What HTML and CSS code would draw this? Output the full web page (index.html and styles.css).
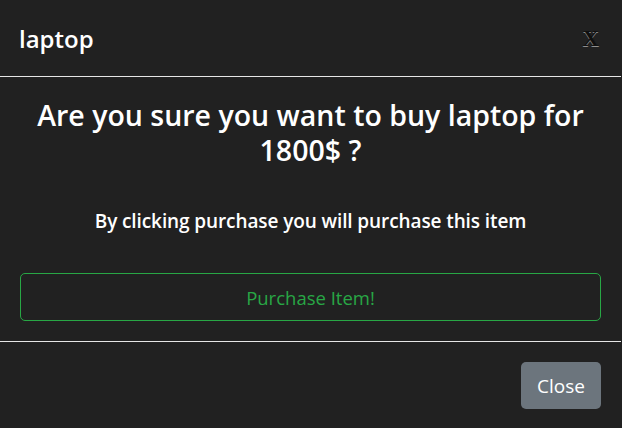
FILE: index.html
```html
<!DOCTYPE html>
<html>
<head>
<meta charset="utf-8">
<link rel="stylesheet" href="styles.css">
</head>
<body>
<div class="modal">
  <div class="modal-header">
    <h5 class="modal-title">laptop</h5>
    <button class="close" type="button">X</button>
  </div>
  <div class="modal-body">
    <h3 class="question">Are you sure you want to buy laptop for 1800$ ?</h3>
    <p class="note">By clicking purchase you will purchase this item</p>
    <button class="btn-purchase" type="button">Purchase Item!</button>
  </div>
  <div class="modal-footer">
    <button class="btn-close" type="button">Close</button>
  </div>
</div>
</body>
</html>
```
FILE: styles.css
```css
html, body {
  margin: 0;
  padding: 0;
  background: #212121;
}
body {
  font-family: "Open Sans", "Noto Sans", sans-serif;
  color: #ffffff;
}
.modal {
  width: 621px;
  display: flex;
  flex-direction: column;
}
.modal-header {
  height: 77px;
  box-sizing: border-box;
  border-bottom: 1px solid #e6e6e6;
  display: flex;
  align-items: center;
  justify-content: space-between;
  padding: 0 22px 0 19px;
}
.modal-title {
  margin: 0;
  font-size: 24px;
  font-weight: 600;
  line-height: normal;
}
.close {
  background: none;
  border: 0;
  padding: 0;
  font-family: "Liberation Serif", serif;
  font-size: 23px;
  font-weight: 700;
  color: #000;
  opacity: 0.5;
  text-shadow: 0 1px 0 #fff;
  line-height: 1;
}
.modal-body {
  padding: 21px 20px 20px 20px;
  display: flex;
  flex-direction: column;
  align-items: stretch;
  border-bottom: 1px solid #e6e6e6;
}
.question {
  margin: 0;
  text-align: center;
  font-size: 28.5px;
  font-weight: 600;
  line-height: 35px;
}
.note {
  margin: 41px 0 0 0;
  text-align: center;
  font-size: 19px;
  font-weight: 600;
  line-height: 24px;
  letter-spacing: -0.1px;
}
.btn-purchase {
  margin-top: 40px;
  height: 48px;
  background: transparent;
  border: 1px solid #28a745;
  border-radius: 5px;
  color: #28a745;
  font-family: "Open Sans", "Noto Sans", sans-serif;
  font-size: 18.5px;
}
.modal-footer {
  display: flex;
  justify-content: flex-end;
  padding: 20px 20px 19px 0;
}
.btn-close {
  width: 80px;
  height: 47px;
  background: #6c757d;
  border: 0;
  border-radius: 5px;
  color: #fff;
  font-family: "Open Sans", "Noto Sans", sans-serif;
  font-size: 19px;
}
```
